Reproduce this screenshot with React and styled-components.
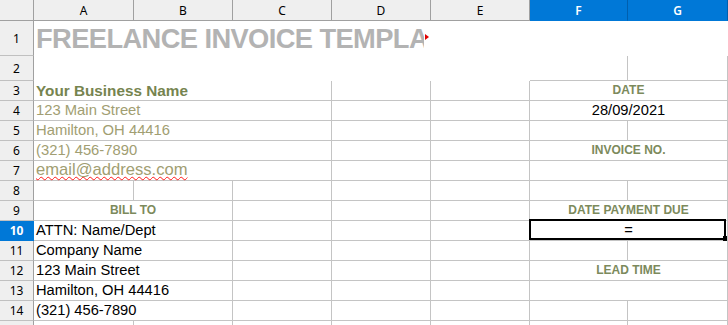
import React from 'react'
import styled, { createGlobalStyle } from 'styled-components'

const GRID = '#c4c4c4';
const HEAD_LINE = '#a0a0a0';
const BLUE = '#0078d7';

const GlobalStyle = createGlobalStyle`
  html, body {
    margin: 0;
    padding: 0;
    background: #fff;
    overflow: hidden;
  }
`;

const Sheet = styled.div`
  display: grid;
  grid-template-columns: 34px 100px 99px 99px 99px 99px 98px 100px;
  grid-template-rows: 21px 35px 25px repeat(13, 20px);
  width: 728px;
  font-family: "Liberation Sans", Arial, sans-serif;
  color: #000;
`;

const Corner = styled.div`
  background: #efefef;
  border-right: 1px solid ${HEAD_LINE};
  border-bottom: 1px solid ${HEAD_LINE};
`;

const ColHead = styled.div`
  display: flex;
  align-items: center;
  justify-content: center;
  background: ${p => (p.$active ? BLUE : '#efefef')};
  color: ${p => (p.$active ? '#fff' : '#000')};
  border-right: 1px solid ${p => (p.$active ? '#005fae' : HEAD_LINE)};
  border-bottom: 1px solid ${p => (p.$active ? BLUE : HEAD_LINE)};
  font-family: "Noto Sans", "Liberation Sans", sans-serif;
  font-size: 12px;
  font-weight: ${p => (p.$active ? 600 : 400)};
`;

const RowHead = styled.div`
  display: flex;
  align-items: center;
  justify-content: center;
  background: ${p => (p.$active ? BLUE : '#efefef')};
  color: ${p => (p.$active ? '#fff' : '#000')};
  border-right: 1px solid ${p => (p.$active ? BLUE : HEAD_LINE)};
  border-bottom: 1px solid ${p => (p.$active ? BLUE : '#c0c0c0')};
  font-family: "Noto Sans", "Liberation Sans", sans-serif;
  font-size: 12px;
  font-weight: ${p => (p.$active ? 700 : 400)};
`;

const Cell = styled.div`
  grid-column: span ${p => p.$span || 1};
  position: relative;
  display: flex;
  align-items: flex-end;
  justify-content: ${p => (p.$center ? 'center' : 'flex-start')};
  padding: 0 ${p => (p.$clip ? '6px' : '2px')} ${p => p.$pad || 0}px 2px;
  min-width: 0;
  border-right: 1px solid ${p => (p.$noRight ? 'transparent' : GRID)};
  border-bottom: 1px solid ${p => (p.$noBottom ? 'transparent' : GRID)};
  overflow: ${p => (p.$clip ? 'hidden' : 'visible')};
  white-space: nowrap;

  ${p => p.$selected && `
    &::before {
      content: '';
      position: absolute;
      top: -2px;
      left: -1px;
      right: 1px;
      bottom: 0;
      border: 2px solid #000;
    }
    &::after {
      content: '';
      position: absolute;
      right: 0;
      bottom: -1px;
      width: 4px;
      height: 5px;
      background: #000;
    }
  `}
`;

const kinds = {
  title: 'font-size: 27.3px; line-height: 27px; font-weight: 700; color: #b3b3b3; letter-spacing: -0.6px;',
  biz: 'font-size: 15.3px; line-height: 19px; font-weight: 700; color: #76844f;',
  addr: 'font-size: 14.8px; line-height: 19px; color: #a19e72;',
  email: `font-size: 16.6px; line-height: 19px; color: #a19e72;
    text-decoration-line: underline;
    text-decoration-style: wavy;
    text-decoration-color: #ff1a1a;
    text-decoration-thickness: 1.2px;
    text-underline-offset: 1px;
    text-decoration-skip-ink: none;`,
  label: 'font-size: 12px; line-height: 19px; font-weight: 700; color: #7c8a5c;',
  plain: 'font-size: 14.7px; line-height: 19px; color: #000;',
};

const Text = styled.span`
  display: block;
  min-width: 0;
  overflow: ${p => (p.$clip ? 'hidden' : 'visible')};
  text-overflow: clip;
  ${p => kinds[p.$kind || 'plain']}
`;

const OverflowMark = styled.span`
  position: absolute;
  right: 1px;
  top: 13px;
  width: 0;
  height: 0;
  border-left: 4px solid #e00000;
  border-top: 3.5px solid transparent;
  border-bottom: 3.5px solid transparent;
`;

const COLS = ['A', 'B', 'C', 'D', 'E', 'F', 'G'];
const ACTIVE_COLS = ['F', 'G'];
const ACTIVE_ROW = 10;

const c = (props = {}) => props;
const blank = (n) => Array.from({ length: n }, () => c());
const empty = (n) => Array.from({ length: n }, () => c({ noRight: true, noBottom: true }));

const rows = [
  {
    n: 1,
    cells: [
      c({ span: 4, text: 'FREELANCE INVOICE TEMPLATE', kind: 'title', noRight: true, noBottom: true, clip: true, pad: 3 }),
      ...empty(3),
    ],
  },
  { n: 2, cells: [...empty(5), c(), c()] },
  { n: 3, cells: [c({ span: 3, text: 'Your Business Name', kind: 'biz' }), ...blank(2), c({ span: 2, text: 'DATE', kind: 'label', center: true })] },
  { n: 4, cells: [c({ span: 3, text: '123 Main Street', kind: 'addr' }), ...blank(2), c({ span: 2, text: '28/09/2021', center: true })] },
  { n: 5, cells: [c({ span: 3, text: 'Hamilton, OH 44416', kind: 'addr' }), ...blank(4)] },
  { n: 6, cells: [c({ span: 3, text: '(321) 456-7890', kind: 'addr' }), ...blank(2), c({ span: 2, text: 'INVOICE NO.', kind: 'label', center: true })] },
  { n: 7, cells: [c({ span: 3, text: 'email@address.com', kind: 'email', pad: 1 }), ...blank(2), c({ span: 2 })] },
  { n: 8, cells: blank(7) },
  { n: 9, cells: [c({ span: 2, text: 'BILL TO', kind: 'label', center: true }), ...blank(3), c({ span: 2, text: 'DATE PAYMENT DUE', kind: 'label', center: true })] },
  { n: 10, cells: [c({ span: 2, text: 'ATTN: Name/Dept' }), ...blank(3), c({ span: 2, text: '=', center: true, selected: true })] },
  { n: 11, cells: [c({ span: 2, text: 'Company Name' }), ...blank(5)] },
  { n: 12, cells: [c({ span: 2, text: '123 Main Street' }), ...blank(3), c({ span: 2, text: 'LEAD TIME', kind: 'label', center: true })] },
  { n: 13, cells: [c({ span: 2, text: 'Hamilton, OH 44416' }), ...blank(3), c({ span: 2 })] },
  { n: 14, cells: [c({ span: 2, text: '(321) 456-7890' }), ...blank(5)] },
  { n: 15, cells: blank(7) },
];

export default function App() {
  return (
    <>
      <GlobalStyle />
      <Sheet>
        <Corner />
        {COLS.map(col => (
          <ColHead key={col} $active={ACTIVE_COLS.includes(col)}>{col}</ColHead>
        ))}
        {rows.map(row => (
          <React.Fragment key={row.n}>
            <RowHead $active={row.n === ACTIVE_ROW}>{row.n}</RowHead>
            {row.cells.map((cell, i) => (
              <Cell
                key={i}
                $span={cell.span}
                $center={cell.center}
                $noRight={cell.noRight}
                $noBottom={cell.noBottom}
                $clip={cell.clip}
                $pad={cell.pad}
                $selected={cell.selected}
              >
                {cell.text && <Text $kind={cell.kind} $clip={cell.clip}>{cell.text}</Text>}
                {cell.clip && <OverflowMark />}
              </Cell>
            ))}
          </React.Fragment>
        ))}
      </Sheet>
    </>
  )
}
